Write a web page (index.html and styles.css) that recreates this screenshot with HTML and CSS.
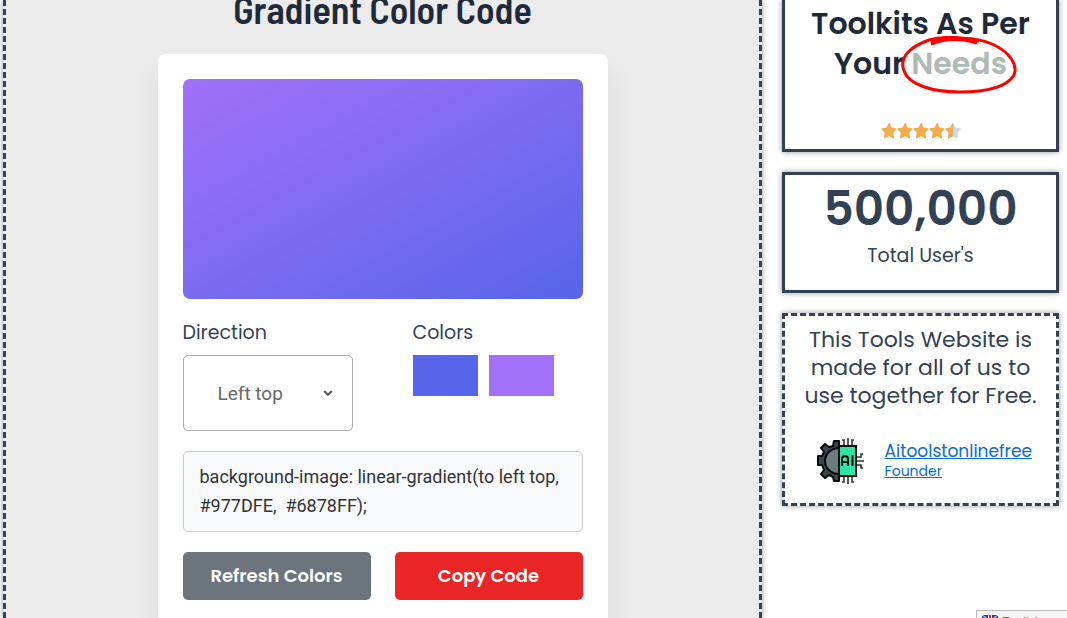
FILE: index.html
```
<!DOCTYPE html>
<html lang="en">
<head>
    <meta charset="UTF-8">
    <meta name="viewport" content="width=device-width, initial-scale=1.0">
    <title>Gradient Color Code</title>
    <link rel="stylesheet" href="styles.css">
</head>
<body>

    <main class="content">
        <h1>Gradient Color Code</h1>

        <div class="wrapper">
            <div class="gradient-box"></div>
            <div class="row options">
                <div class="column">
                    <label for="direction">Direction</label>
                    <div class="select-box">
                        <select id="direction">
                            <option>Top</option>
                            <option>Right top</option>
                            <option>Right</option>
                            <option>Right bottom</option>
                            <option>Bottom</option>
                            <option>Left bottom</option>
                            <option>Left</option>
                            <option selected>Left top</option>
                        </select>
                        <svg class="arrow" viewBox="0 0 10 10"><path d="M1.2 3 5 6.8 8.8 3" fill="none" stroke="#5c5c5c" stroke-width="2"/></svg>
                    </div>
                </div>
                <div class="column">
                    <label for="color1">Colors</label>
                    <div class="colors">
                        <input type="color" id="color1" value="#5665e9">
                        <input type="color" id="color2" value="#a271f8" aria-label="Second color">
                    </div>
                </div>
            </div>
            <textarea class="code" rows="2" aria-label="CSS code" readonly>background-image: linear-gradient(to left top, #977DFE,  #6878FF);</textarea>
            <div class="row buttons">
                <button class="refresh">Refresh Colors</button>
                <button class="copy">Copy Code</button>
            </div>
        </div>
    </main>

    <aside class="sidebar">
        <section class="box rating">
            <h2>Toolkits As Per Your
                <span class="circled">Needs<svg viewBox="0 0 116 60"><path d="M30 8C46 2 63 3 76 7" fill="none" stroke="#f00" stroke-width="3"/><path d="M30 7C50 0 75 1 91 8C109 16 117 29 113 39C106 51 86 56 58 56C32 56 8 49 3 35C-2 22 8 11 28 4C44 0 62 1 78 5" fill="none" stroke="#f00" stroke-width="3"/></svg></span>
            </h2>
            <svg class="stars" viewBox="0 0 80 16">
                <defs>
                    <path id="star" d="M8 1 10.1 5.200 14.800 6 11.500 9.500 12.200 14.500 8 12.200 3.800 14.500 4.500 9.500 1.200 6 5.900 5.200Z" stroke-width="1.600" stroke-linejoin="round"/>
                    <clipPath id="half"><rect width="8" height="16"/></clipPath>
                </defs>
                <g fill="#f0ad4e" stroke="#f0ad4e">
                    <use href="#star"/>
                    <use href="#star" x="16"/>
                    <use href="#star" x="32"/>
                    <use href="#star" x="48"/>
                </g>
                <g transform="translate(64)">
                    <use href="#star" fill="#ccd6df" stroke="#ccd6df"/>
                    <g clip-path="url(#half)"><use href="#star" fill="#f0ad4e" stroke="#f0ad4e"/></g>
                </g>
            </svg>
        </section>

        <section class="box users">
            <div class="number">500,000</div>
            <div class="title">Total User's</div>
        </section>

        <section class="box about">
            <p>This Tools Website is made for all of us to use together for Free.</p>
            <div class="author">
                <svg class="logo" viewBox="0 0 48 48">
                    <path d="M22 4H17L16 9 12 10 8 7 4 11 7 15 5 19H1V28H5L7 33 4 37 8 41 12 38 16 40 17 44H22Z" fill="#37474f" stroke="#080808" stroke-width="2" stroke-linejoin="round"/>
                    <path d="M22 11A14 13 0 0 0 22 37Z" fill="#6b7c83" stroke="#080808" stroke-width="2"/>
                    <path d="M31 1V8M27 8V3H25M35 8V3H37M31 40V47M27 40V45H25M35 40V45H37M40 24H47M40 20H44V17H46M40 28H44V31H46" fill="none" stroke="#333" stroke-width="1.600"/>
                    <rect x="22" y="9" width="17" height="30" fill="#2de5a7" stroke="#080808" stroke-width="2"/>
                    <path d="M25 29V22Q25 19 28 19T31 22V29M25 25H31M35.500 18V29" fill="none" stroke="#080808" stroke-width="2"/>
                </svg>
                <div class="links">
                    <a class="name" href="#">Aitoolstonlinefree</a>
                    <a class="role" href="#">Founder</a>
                </div>
            </div>
        </section>
    </aside>

    <a class="language" href="#">
        <svg class="flag" viewBox="0 0 16 11"><rect width="16" height="11" fill="#2b3990"/><path d="M0 0 16 11M16 0 0 11" stroke="#fff" stroke-width="1"/><path d="M8 0V11M0 5.500H16" stroke="#fff" stroke-width="4"/><path d="M8 0V11M0 5.500H16" stroke="#d8202f" stroke-width="2"/></svg>
        English
    </a>

</body>
</html>
```
FILE: styles.css
```
* {
    box-sizing: border-box;
}

body {
    display: flex;
    gap: 20px;
    height: 100vh;
    margin: 0;
    padding: 0 8px 0 3px;
    overflow: hidden;
    background: white;
    color: #334155;
    font-family: Poppins, Inter, sans-serif;
}

.content {
    flex: 1;
    height: 100vh;
    background: #ebebeb;
    border: 3px dashed #334155;
    border-width: 0 3px;
    box-shadow: 0 0 6px rgba(0, 0, 0, 0.4);
}

h1 {
    margin: 0 0 36px;
    color: #1e293b;
    font-family: "Barlow Semi Condensed", "Liberation Sans Narrow", Roboto, sans-serif;
    font-size: 38px;
    font-weight: 600;
    line-height: 18px;
    text-align: center;
}

.wrapper {
    max-width: 450px;
    margin: auto;
    padding: 25px;
    background: white;
    border-radius: 7px;
    box-shadow: 0 15px 30px rgba(0, 0, 0, 0.06);
}

.gradient-box {
    height: 220px;
    border-radius: 7px;
    background-image: linear-gradient(to left top, #5665e9, #a271f8);
}

.row {
    display: flex;
}

.options {
    gap: 60px;
    margin: 20px 0;
}

.column {
    width: 170px;
}

.column label {
    display: block;
    margin-bottom: 8px;
    font-size: 19px;
    line-height: 28px;
}

.select-box {
    position: relative;
    height: 76px;
}

.select-box select {
    width: 100%;
    height: 100%;
    padding: 0 34px;
    appearance: none;
    background: white;
    border: 1px solid #aaa;
    border-radius: 5px;
    color: #666;
    font-family: Roboto, sans-serif;
    font-size: 19px;
}

.arrow {
    position: absolute;
    top: 33px;
    right: 20px;
    width: 10px;
    height: 10px;
    pointer-events: none;
}

.colors {
    display: flex;
    gap: 11px;
}

.colors input {
    width: 65px;
    height: 41px;
    padding: 0;
    appearance: none;
    border: none;
    background: none;
}

.colors input::-webkit-color-swatch-wrapper {
    padding: 0;
}

.colors input::-webkit-color-swatch {
    border: none;
    border-radius: 0;
}

.code {
    display: block;
    width: 100%;
    height: 81px;
    padding: 10px 16px;
    resize: none;
    overflow: hidden;
    background: #f8fafc;
    border: 1px solid #ccc;
    border-radius: 5px;
    color: #333;
    font-family: Roboto, sans-serif;
    font-size: 18px;
    line-height: 29px;
}

.buttons {
    gap: 24px;
    margin-top: 20px;
}

button {
    flex: 1;
    height: 48px;
    padding: 0 0 2px;
    border: none;
    border-radius: 5px;
    color: white;
    font-family: Poppins, Inter, sans-serif;
    font-size: 18px;
    font-weight: 600;
    cursor: pointer;
}

.refresh {
    background: #6c757d;
}

.copy {
    background: #e92525;
}

.sidebar {
    display: flex;
    flex: 0 0 277px;
    flex-direction: column;
    gap: 20px;
    text-align: center;
}

.box {
    border: 3px solid #334155;
    box-shadow: 0 0 6px rgba(0, 0, 0, 0.4);
}

.rating {
    padding: 4px 20px 10px;
    border-top: none;
}

h2 {
    margin: 0 0 39px;
    color: #1e293b;
    font-size: 30px;
    font-weight: 600;
    line-height: 40px;
}

.circled {
    position: relative;
    color: #adbab7;
}

.circled svg {
    position: absolute;
    top: -6px;
    left: -10px;
    width: 116px;
    height: 60px;
}

.stars {
    display: block;
    width: 80px;
    height: 16px;
    margin: auto;
}

.users {
    padding: 8px 20px 22px;
}

.number {
    font-size: 47px;
    font-weight: 600;
    line-height: 52px;
}

.title {
    margin-top: 9px;
    font-size: 19px;
    line-height: 24px;
}

.about {
    padding: 10px 16px 18px;
    border-style: dashed;
}

.about p {
    margin: 0 0 27px;
    font-size: 22px;
    line-height: 28px;
}

.author {
    display: flex;
    justify-content: flex-end;
    align-items: center;
    gap: 20px;
    padding-right: 8px;
}

.logo {
    width: 48px;
    height: 48px;
}

.links {
    display: flex;
    flex-direction: column;
    text-align: left;
    line-height: 20px;
}

.links a {
    color: #0a6bd0;
}

.name {
    font-size: 17px;
}

.role {
    font-size: 14px;
}

.language {
    position: fixed;
    right: 0;
    bottom: -16px;
    display: flex;
    gap: 4px;
    width: 91px;
    height: 24px;
    padding: 4px 5px;
    border: 1px solid #bbb;
    border-width: 1px 0 1px 1px;
    background: #f5f5f5;
    color: #666;
    font-family: "Liberation Sans", sans-serif;
    font-size: 12px;
    line-height: 14px;
    text-decoration: none;
}

.flag {
    width: 16px;
    height: 11px;
}
```
